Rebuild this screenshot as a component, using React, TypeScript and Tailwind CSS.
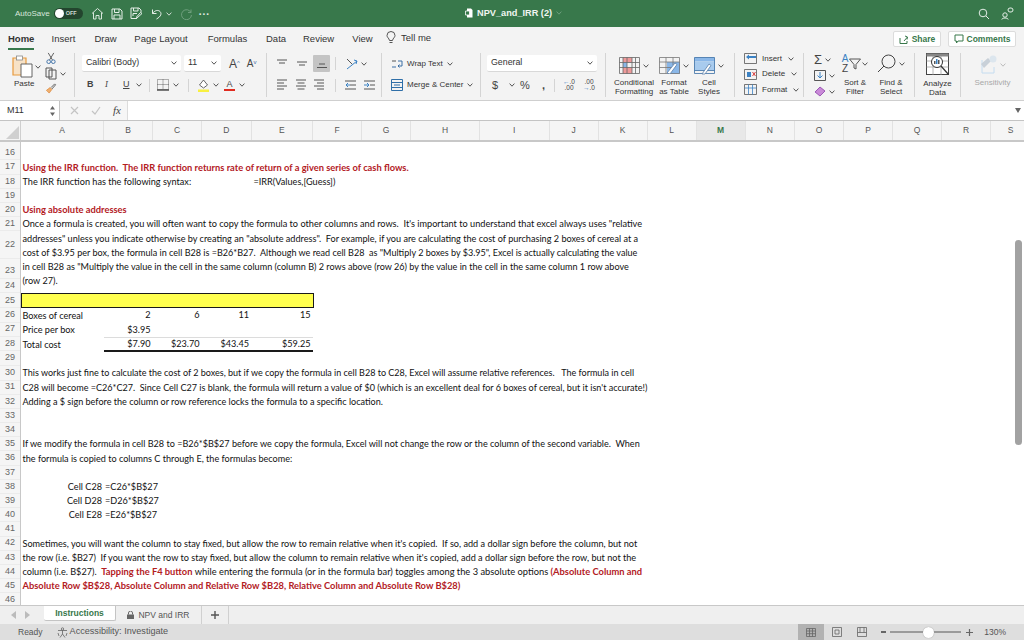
import React from "react";

const UI = "font-['Liberation_Sans',Arial,sans-serif]";
const CELL = "font-['Lato','Liberation_Sans',sans-serif]";

const Chev = ({ c = "#555" }: { c?: string }) => (
  <svg width="6" height="4" viewBox="0 0 6 4" className="shrink-0"><path d="M.6.6 3 3.2 5.4.6" fill="none" stroke={c} strokeWidth="1" /></svg>
);

const Sep = () => <div className="w-px h-[44px] bg-[#d4d4d4] shrink-0 self-center" />;
const MiniSep = () => <div className="w-px h-[13px] bg-[#d4d4d4] shrink-0" />;

const Lines = ({ kind }: { kind: string }) => {
  const map: Record<string, string> = {
    top: "M1 2H11M3 5H9",
    mid: "M1 4H11M3 7H9",
    bot: "M3 6H9M1 9.5H11",
    left: "M1 1H11M1 4H8M1 7H11M1 10H8",
    center: "M1 1H11M2.5 4H9.5M1 7H11M2.5 10H9.5",
    right: "M1 1H11M4 4H11M1 7H11M4 10H11",
  };
  return <svg width="12" height="12" viewBox="0 0 12 12"><path d={map[kind]} fill="none" stroke="#555" strokeWidth="1" /></svg>;
};

const tabs = ["Home", "Insert", "Draw", "Page Layout", "Formulas", "Data", "Review", "View"];
const tabW = [26, 25, 23, 54, 41, 20, 31, 21];
const tabG = [0, 17, 18, 17, 19, 18, 17, 18];

const TitleBar = () => (
  <div className={`h-[27px] bg-[#38784b] flex items-center text-white shrink-0 ${UI}`}>
    <span className="ml-[15px] text-[8px] text-[#d8e6dc]">AutoSave</span>
    <div className="ml-[4px] w-[29px] h-[11px] rounded-full bg-[#23452e] flex items-center">
      <div className="w-[9px] h-[9px] ml-[1px] rounded-full bg-white" />
      <span className="ml-[2px] text-[5.5px] font-bold text-[#cfdcd3]">OFF</span>
    </div>
    <svg className="ml-[8px]" width="13" height="13" viewBox="0 0 13 13" fill="none" stroke="#d8e6dc"><path d="M1 6.5 6.5 1.5 12 6.5M2.5 5.5V12H5V8.5H8V12H10.5V5.5" /></svg>
    <svg className="ml-[7px]" width="12" height="12" viewBox="0 0 12 12" fill="none" stroke="#e4eee7"><path d="M1 1H9L11 3V11H1ZM3.5 1V4.5H8V1M3 11V7H9V11" /></svg>
    <svg className="ml-[7px]" width="13" height="13" viewBox="0 0 13 13" fill="none" stroke="#e4eee7"><path d="M7 11.5H1V1H9L11 3V5.5M3.5 1V4H8V1M3 9V6.5H7M7 11 12 6.5 10.5 5.5 6.5 10Z" /></svg>
    <svg className="ml-[8px]" width="12" height="12" viewBox="0 0 12 12" fill="none" stroke="#e4eee7"><path d="M1.5 1.5V5.5H5.5M1.5 5.5C3.5 2.5 7 1.5 9 3.5 11 5.5 10 8.5 5.5 11" /></svg>
    <div className="ml-[3px]"><Chev c="#cfdcd3" /></div>
    <svg className="ml-[8px]" width="13" height="13" viewBox="0 0 13 13" fill="none" stroke="#6e9e7d"><path d="M11 2.5V5.5H8M11 5.5A5 5 0 1 0 11.5 8" /></svg>
    <span className="ml-[6px] text-[10px] leading-none tracking-[1px] text-[#e4eee7] font-bold -mt-[3px]">...</span>
    <div className="ml-[255px] flex items-center gap-[4px]">
      <svg width="8" height="10" viewBox="0 0 8 10"><path d="M2 0.5H6L7.5 2V9.5H2Z" fill="#fff" /><path d="M0.5 3H4.5V7H0.5Z" fill="#38784b" stroke="#fff" strokeWidth=".8" /></svg>
      <span className="text-[9.2px] font-bold text-[#f0f5f1]">NPV_and_IRR (2)</span>
      <Chev c="#6e9e7d" />
    </div>
    <svg className="ml-auto" width="12" height="12" viewBox="0 0 12 12" fill="none" stroke="#e4eee7" strokeWidth="1"><circle cx="5" cy="5" r="3.8" /><path d="M8 8 11 11" /></svg>
    <svg className="ml-[11px] mr-[10px]" width="13" height="13" viewBox="0 0 13 13" fill="none" stroke="#e4eee7"><circle cx="4" cy="8" r="2.2" /><path d="M.8 12.5C1 10.5 7 10.5 7.2 12.5" /><rect x="7" y="1" width="5" height="4" rx="2" /></svg>
  </div>
);

const TabRow = () => (
  <div className={`h-[23px] bg-[#f3f3f3] flex shrink-0 text-[#333] text-[9.5px] ${UI}`}>
    <div className="flex pl-[8px]">
      {tabs.map((t, i) => (
        <div key={t} style={{ width: tabW[i], marginLeft: tabG[i] }} className={`h-[20px] mt-[3px] text-center leading-[18px] whitespace-nowrap ${i === 0 ? "font-bold border-b-2 border-[#38784b]" : ""}`}>{t}</div>
      ))}
    </div>
    <div className="ml-[13px] flex items-start pt-[4px] gap-[5px]">
      <svg width="10" height="13" viewBox="0 0 10 13" fill="none" stroke="#555"><path d="M3.5 9.5C3 7 1 6.5 1 4.5A4 4 0 0 1 9 4.5C9 6.5 7 7 6.5 9.5ZM3.5 11.5H6.5" /></svg>
      <span className="leading-[14px]">Tell me</span>
    </div>
    <div className="ml-auto flex pt-[4px] gap-[7px] mr-[8px] text-[#38784b] font-bold text-[8.5px]">
      <div className="w-[48px] h-[16px] bg-white border border-[#dcdcdc] rounded-[2px] flex items-center justify-center gap-[3px]">
        <svg width="10" height="10" viewBox="0 0 10 10" fill="none" stroke="#38784b"><path d="M5 7 8.5 3 6 2M8.5 3 8 5.5M1 4V9.5H8V7" /></svg>Share
      </div>
      <div className="w-[68px] h-[16px] bg-white border border-[#dcdcdc] rounded-[2px] flex items-center justify-center gap-[3px]">
        <svg width="10" height="10" viewBox="0 0 10 10" fill="none" stroke="#38784b"><path d="M1 1H9V7H4L2.5 9V7H1Z" /></svg>Comments
      </div>
    </div>
  </div>
);

const Select = ({ text, w }: { text: string; w: number }) => (
  <div style={{ width: w }} className="h-[17px] bg-white rounded-[2px] border-b border-[#d8d8d8] flex items-center justify-between px-[4px] text-[8.8px] text-[#333]">
    <span>{text}</span><Chev />
  </div>
);

const BigLabel = ({ a, b }: { a: string; b?: string }) => (
  <div className="text-[8px] leading-[9px] text-center text-[#333] whitespace-nowrap">{a}{b && <br />}{b}</div>
);

const CondIcon = () => (
  <svg width="21" height="17" viewBox="0 0 21 17">
    <rect x="4" y=".5" width="9" height="5" fill="#ee9a9a" /><rect x="4" y="5.5" width="4" height="5" fill="#8ab7e8" /><rect x="4" y="10.5" width="9" height="6" fill="#ee9a9a" />
    <path d="M.5.5H20.5V16.5H.5ZM4 .5V16.5M8 .5V16.5M13 .5V16.5M16.5.5V16.5M.5 5.5H20.5M.5 10.5H20.5" fill="none" stroke="#666" strokeWidth=".8" />
  </svg>
);
const TableIcon = () => (
  <svg width="21" height="17" viewBox="0 0 21 17">
    <rect x="8" y="5" width="13" height="12" fill="#8ab7e8" />
    <path d="M.5.5H20.5V16.5H.5ZM.5 5H20.5M.5 10.5H14M7 .5V16.5M14 .5V8" fill="none" stroke="#777" strokeWidth=".8" />
    <path d="M8 16 16 6 18 7.5 11 17Z" fill="#fff" stroke="#5a7fa8" strokeWidth=".8" />
  </svg>
);
const StylesIcon = () => (
  <svg width="21" height="18" viewBox="0 0 21 18">
    <rect x=".5" y=".5" width="20" height="4" fill="#8ab7e8" /><rect x=".5" y="4.5" width="20" height="9" fill="#a8cbee" />
    <path d="M.5.5H20.5V16.5H.5ZM.5 13.5H20.5" fill="none" stroke="#3b6ea5" strokeWidth=".8" />
    <path d="M8 17 15 7 17 8.5 11 17Z" fill="#fff" stroke="#5a7fa8" strokeWidth=".8" />
  </svg>
);

const CellRow = ({ label, color, kind }: { label: string; color: string; kind: string }) => (
  <div className="flex items-center h-[15.5px] text-[8px] text-[#333] whitespace-nowrap">
    <svg width="13" height="11" viewBox="0 0 13 11" className="mr-[5px]">
      <path d="M.5.5H12.5V10.5H.5Z" fill="none" stroke="#555" strokeWidth=".8" />
      {kind === "i" && <path d="M12 3H5V1.5L2 4 5 6.5V5H12Z" fill={color} />}
      {kind === "d" && <><rect x="3" y="3" width="4" height="5" fill={color} /><path d="M8.5 3 11.5 7M11.5 3 8.5 7" stroke="#d84040" strokeWidth="1" /></>}
      {kind === "f" && <path d="M.5 4H12.5M4.5.5V10.5M8.5.5V10.5" stroke={color} strokeWidth=".8" />}
    </svg>
    <span>{label}</span><div className="ml-[6px]"><Chev /></div>
  </div>
);

const Ribbon = () => (
  <div className={`h-[51px] bg-[#f3f3f3] border-b border-[#cfcfcf] flex shrink-0 ${UI}`}>
    {/* clipboard */}
    <div className="w-[74px] flex pl-[12px] pt-[5px] shrink-0">
      <div className="flex flex-col items-start w-[27px]">
        <div className="flex items-center gap-[2px]">
          <svg width="21" height="23" viewBox="0 0 21 23">
            <path d="M1 3H14V20H1Z" fill="#f7e2c7" stroke="#e89a3c" strokeWidth="1.2" />
            <rect x="4.5" y="1" width="6" height="4" fill="#fff" stroke="#888" strokeWidth=".8" />
            <path d="M9 9H20V22H9Z" fill="#fff" stroke="#555" strokeWidth=".9" />
          </svg>
          <Chev />
        </div>
        <div className="text-[8px] leading-[9px] text-[#333] mt-[1px] ml-[2px]">Paste</div>
      </div>
      <div className="flex flex-col ml-[6px] -mt-[3px] gap-[3px]">
        <svg width="12" height="12" viewBox="0 0 12 13" fill="none" stroke="#3b6ea5"><circle cx="3.5" cy="10.5" r="2" /><circle cx="8.5" cy="10.5" r="2" /><path d="M4.5 8.5 9 1M7.5 8.5 3 1" stroke="#555" /></svg>
        <div className="flex items-center gap-[3px]">
          <svg width="12" height="13" viewBox="0 0 12 13" fill="none" stroke="#555"><path d="M1 1H7V10H1ZM4 3H11V12H4Z" fill="#f3f3f3" /></svg>
          <Chev />
        </div>
        <svg width="12" height="11" viewBox="0 0 12 12"><path d="M1 8 4 11 7 7 5 5Z" fill="#f0b070" stroke="#d88030" strokeWidth=".7" /><path d="M6 5 10 1 11 2 7 6.5" fill="none" stroke="#555" /></svg>
      </div>
    </div>
    <Sep />
    {/* font */}
    <div className="w-[191px] pl-[7px] pt-[5px] shrink-0 flex flex-col gap-[5px]">
      <div className="flex items-center gap-[3px]">
        <Select text="Calibri (Body)" w={99} />
        <Select text="11" w={37} />
        <span className="ml-[5px] text-[12px] leading-none text-[#444]">A<sup className="text-[6px] text-[#3b6ea5]">^</sup></span>
        <span className="ml-[4px] text-[10px] leading-none text-[#444]">A<sup className="text-[6px] text-[#3b6ea5]">v</sup></span>
      </div>
      <div className="flex items-center h-[16px] text-[9px] text-[#444] pl-[5px]">
        <span className="font-bold w-[18px]">B</span>
        <span className="italic font-serif w-[18px]">I</span>
        <span className="underline w-[13px]">U</span>
        <Chev />
        <div className="mx-[7px]"><MiniSep /></div>
        <svg width="12" height="12" viewBox="0 0 12 12" fill="none" stroke="#444" strokeWidth=".8"><path d="M.5.5H11.5V10.5H.5ZM6 .5V10.5M.5 5.5H11.5" strokeDasharray="1 1" /><path d="M0 11H12" strokeWidth="1.4" /></svg>
        <div className="ml-[4px]"><Chev /></div>
        <div className="mx-[9px]"><MiniSep /></div>
        <svg width="11" height="13" viewBox="0 0 11 13"><path d="M5.5 1 9.5 6 5.5 9 1.5 6Z" fill="#fff" stroke="#444" strokeWidth=".8" /><rect y="10.5" width="11" height="2.5" fill="#f8f040" /></svg>
        <div className="ml-[4px]"><Chev /></div>
        <div className="ml-[5px] flex flex-col items-center w-[11px]">
          <span className="text-[9px] leading-[10px]">A</span><div className="w-[11px] h-[2.5px] bg-[#e02b20]" />
        </div>
        <div className="ml-[4px]"><Chev /></div>
      </div>
    </div>
    <Sep />
    {/* align */}
    <div className="w-[114px] pl-[9px] pt-[5px] shrink-0 flex flex-col gap-[5px]">
      <div className="flex items-center h-[17px]">
        <div className="w-[19px]"><Lines kind="top" /></div>
        <div className="w-[17px] ml-[1px]"><Lines kind="mid" /></div>
        <div className="w-[17px] h-[17px] bg-[#c4c4c4] rounded-[1px] flex items-center justify-center"><Lines kind="bot" /></div>
        <div className="ml-[5px]"><MiniSep /></div>
        <svg className="ml-[10px]" width="12" height="12" viewBox="0 0 12 12" fill="none" stroke="#3b82c4"><path d="M1 11 11 3M8 2 11 3 10 6" /><path d="M1 1 6 6" stroke="#555" /></svg>
        <div className="ml-[3px]"><Chev /></div>
      </div>
      <div className="flex items-center h-[16px]">
        <div className="w-[19px]"><Lines kind="left" /></div>
        <div className="w-[18px]"><Lines kind="center" /></div>
        <div className="w-[17px]"><Lines kind="right" /></div>
        <div className="ml-[5px]"><MiniSep /></div>
        <svg className="ml-[9px]" width="11" height="10" viewBox="0 0 11 10" fill="none" stroke="#555"><path d="M0 1H11M0 9H11M5 5H11" /><path d="M5 5H1M3 3 1 5 3 7" stroke="#3b82c4" /></svg>
        <svg className="ml-[8px]" width="11" height="10" viewBox="0 0 11 10" fill="none" stroke="#555"><path d="M0 1H11M0 9H11M6 5H11" /><path d="M0 5H5M3 3 5 5 3 7" stroke="#3b82c4" /></svg>
      </div>
    </div>
    <Sep />
    {/* wrap */}
    <div className="w-[98px] pl-[9px] pt-[5px] shrink-0 flex flex-col gap-[5px] text-[8px] text-[#333] whitespace-nowrap">
      <div className="flex items-center h-[17px] gap-[4px]">
        <svg width="12" height="12" viewBox="0 0 12 12" fill="none" stroke="#3b6ea5"><path d="M1 9H5M7 3H11V8H7M8.5 6.5 7 8 8.5 9.5" /><path d="M1 3H5" stroke="#555" /></svg>
        <span>Wrap Text</span><Chev />
      </div>
      <div className="flex items-center h-[16px] gap-[4px]">
        <svg width="12" height="12" viewBox="0 0 12 12" fill="none" stroke="#2f6fa8"><path d="M.5.5H11.5V11.5H.5ZM.5 3.5H11.5M.5 8.5H11.5M3 6H9" /></svg>
        <span>Merge &amp; Center</span><Chev />
      </div>
    </div>
    <Sep />
    {/* number */}
    <div className="w-[124px] pl-[6px] pt-[5px] shrink-0 flex flex-col gap-[5px]">
      <Select text="General" w={110} />
      <div className="flex items-center h-[16px] text-[#444] pl-[5px]">
        <span className="text-[11px] w-[17px]">$</span><Chev />
        <span className="text-[11px] ml-[5px] w-[22px]">%</span>
        <span className="text-[11px] font-bold w-[12px]">,</span>
        <MiniSep />
        <span className="ml-[7px] text-[6.5px] leading-[6.5px] text-center w-[14px]"><span className="text-[#3b82c4]">←</span>.0<br />.00</span>
        <span className="ml-[6px] text-[6.5px] leading-[6.5px] text-center w-[14px]">.00<br /><span className="text-[#3b82c4]">→</span>.0</span>
      </div>
    </div>
    <Sep />
    {/* styles */}
    <div className="w-[128px] pl-[5px] pt-[6px] shrink-0 flex">
      {[
        { a: "Conditional", b: "Formatting", I: CondIcon, w: 46 },
        { a: "Format", b: "as Table", I: TableIcon, w: 34 },
        { a: "Cell", b: "Styles", I: StylesIcon, w: 36 },
      ].map(({ a, b, I, w }) => (
        <div key={a} style={{ width: w }} className="flex flex-col items-center">
          <div className="h-[19px] flex items-center gap-[3px]"><I /><Chev /></div>
          <div className="mt-[3px]"><BigLabel a={a} b={b} /></div>
        </div>
      ))}
    </div>
    <Sep />
    {/* cells */}
    <div className="w-[68px] pl-[9px] pt-[1px] shrink-0">
      <CellRow label="Insert" color="#3b82c4" kind="i" />
      <CellRow label="Delete" color="#3b82c4" kind="d" />
      <CellRow label="Format" color="#3b82c4" kind="f" />
    </div>
    <Sep />
    {/* editing */}
    <div className="w-[110px] pl-[10px] shrink-0 flex">
      <div className="flex flex-col pt-[3px] gap-[3px] w-[22px]">
        <div className="flex items-center gap-[3px] h-[13px]"><span className="text-[13px] leading-none text-[#444]">Σ</span><Chev /></div>
        <div className="flex items-center gap-[3px] h-[13px]">
          <svg width="12" height="11" viewBox="0 0 12 11" fill="none"><path d="M.5.5H11.5V10.5H.5Z" stroke="#555" /><path d="M6 2V8M3.5 5.5 6 8 8.5 5.5" stroke="#3b82c4" /></svg><Chev />
        </div>
        <div className="flex items-center gap-[3px] h-[13px]">
          <svg width="12" height="11" viewBox="0 0 12 11"><path d="M1 6 6 1 11 5 6 10Z" fill="#c98ad8" stroke="#8b3fa8" strokeWidth=".8" /></svg><Chev />
        </div>
      </div>
      <div className="w-[38px] flex flex-col items-center pt-[3px]">
        <div className="h-[21px] flex items-center gap-[1px]">
          <div className="text-[10px] leading-[9.5px] text-center"><span className="text-[#3b82c4]">A</span><br /><span className="text-[#444]">Z</span></div>
          <svg width="12" height="12" viewBox="0 0 12 12" fill="none" stroke="#555"><path d="M.5 1H11.5L7 6.5V11L5 10V6.5Z" /></svg><Chev />
        </div>
        <div className="mt-[4px]"><BigLabel a="Sort &" b="Filter" /></div>
      </div>
      <div className="w-[34px] flex flex-col items-center pt-[3px]">
        <div className="h-[21px] flex items-center gap-[3px]">
          <svg width="19" height="19" viewBox="0 0 19 19" fill="none" stroke="#444"><circle cx="11.5" cy="7.5" r="6.5" /><path d="M7 12 1 18" /></svg><Chev />
        </div>
        <div className="mt-[4px]"><BigLabel a="Find &" b="Select" /></div>
      </div>
    </div>
    <Sep />
    {/* analyze */}
    <div className="w-[45px] shrink-0 flex flex-col items-center pt-[3px]">
      <svg width="24" height="23" viewBox="0 0 24 23" fill="none">
        <rect x=".5" y=".5" width="22" height="21" fill="#fff" stroke="#444" />
        <rect x=".5" y=".5" width="22" height="3" fill="#888" />
        <path d="M.5 8H22.5M.5 14H22.5M7 3V22M15 3V22" stroke="#999" strokeWidth=".7" />
        <circle cx="11" cy="9" r="5.5" fill="#fff" stroke="#333" strokeWidth="1" />
        <rect x="8" y="8" width="1.5" height="3" fill="#555" /><rect x="10" y="6" width="1.5" height="5" fill="#3b82c4" /><rect x="12" y="7" width="1.5" height="4" fill="#555" />
        <path d="M15 13 22.5 21.5" stroke="#333" strokeWidth="1.2" />
      </svg>
      <div className="mt-[3px]"><BigLabel a="Analyze" b="Data" /></div>
    </div>
    <Sep />
    {/* sensitivity */}
    <div className="flex-1 flex flex-col items-center pt-[4px]">
      <div className="flex items-center gap-[2px] h-[21px]">
        <svg width="19" height="20" viewBox="0 0 19 20" fill="none">
          <path d="M3 5V18H15V12" stroke="#c4dcf0" />
          <path d="M2 9 9 3 12 6 5 13Z" fill="#c8d0d8" /><circle cx="14" cy="4" r="3.5" fill="#dce6ee" />
        </svg>
        <Chev c="#bbb" />
      </div>
      <div className="text-[8px] leading-[9px] text-[#a8a8a8] mt-[3px]">Sensitivity</div>
    </div>
  </div>
);

const FormulaBar = () => (
  <div className={`h-[20px] bg-white border-b border-[#c4c4c4] flex items-stretch shrink-0 ${UI}`}>
    <div className="w-[60px] flex items-center justify-between pl-[7px] pr-[4px] border-r border-[#c4c4c4] text-[9px] text-[#333]">
      <span>M11</span>
      <svg width="5" height="12" viewBox="0 0 5 12"><path d="M2.5 1 5 4.5H0ZM2.5 11 0 7.5H5Z" fill="#666" /></svg>
    </div>
    <div className="w-[68px] bg-[#f6f6f6] flex items-center border-r border-[#dcdcdc] pl-[10px]">
      <svg width="9" height="9" viewBox="0 0 9 9" fill="none" stroke="#c4c4c4" strokeWidth="1.2"><path d="M1 1 8 8M8 1 1 8" /></svg>
      <svg className="ml-[12px]" width="10" height="9" viewBox="0 0 10 9" fill="none" stroke="#c4c4c4" strokeWidth="1.2"><path d="M1 5 4 8 9 1" /></svg>
      <span className="ml-[12px] font-['Liberation_Serif',serif] italic text-[11px] text-[#444]">fx</span>
    </div>
    <div className="flex-1 flex items-center justify-end pr-[2px]"><div className="w-0 h-0 border-l-[3.5px] border-r-[3.5px] border-t-[5px] border-l-transparent border-r-transparent border-t-[#666] mr-[1px]" /></div>
  </div>
);

const cols: [string, number][] = [["A", 83], ["B", 49], ["C", 49], ["D", 49.5], ["E", 61.5], ["F", 49], ["G", 49], ["H", 69], ["I", 69.5], ["J", 49], ["K", 49], ["L", 49], ["M", 49], ["N", 49.5], ["O", 49], ["P", 49], ["Q", 49], ["R", 49], ["S", 40]];

const ColHeader = () => (
  <div className={`h-[21px] bg-[#f5f5f5] border-b-2 border-[#c8c8c8] flex shrink-0 text-[8.5px] text-[#555] ${UI}`}>
    <div className="w-[21px] border-r border-[#cfcfcf] shrink-0 flex items-end justify-end pr-[1px] pb-[1px]">
      <div className="w-0 h-0 border-b-[13px] border-l-[13px] border-b-[#d0d0d0] border-l-transparent" />
    </div>
    {cols.map(([c, w]) => (
      <div key={c} style={{ width: w }} className={`shrink-0 flex items-center justify-center border-r border-[#e2e2e2] ${c === "M" ? "bg-[#e8e8e8] text-[#38784b] font-bold" : ""}`}>{c}</div>
    ))}
  </div>
);

const rowHeads: [number, number, number?][] = [
  [16, 14.2], [17, 14.2], [18, 14.2], [19, 14.2], [20, 14.2], [21, 14.2], [22, 27.9], [23, 19.6, 5], [24, 14.5], [25, 15],
  [26, 14.2], [27, 14.2], [28, 14.2], [29, 15.4], [30, 14.2], [31, 14.2], [32, 14.2], [33, 14.2], [34, 14.2], [35, 14.2],
  [36, 14.2], [37, 14.2], [38, 14.2], [39, 14.2], [40, 14.2], [41, 14.2], [42, 14.2], [43, 14.2], [44, 14.2], [45, 14.2], [46, 14.2],
];

const R = ({ children }: { children?: React.ReactNode }) => <span className="text-[#b3201f] font-bold text-[9.32px]">{children}</span>;

const Line = ({ children, cls = "" }: { children?: React.ReactNode; cls?: string }) => (
  <div className={`h-[14.2px] pl-[1.5px] whitespace-nowrap leading-[14px] flex items-center ${cls}`}><span>{children}</span></div>
);

const colW = [49, 49, 49.5, 61.5];

const TableRow = ({ label, vals, last }: { label: string; vals: string[]; last?: boolean }) => (
  <div className={`flex items-center whitespace-nowrap ${last ? "h-[15.4px]" : "h-[14.2px]"}`}>
    <div className="w-[83px] shrink-0 pl-[1.5px]">{label}</div>
    <div className={`flex h-full items-center ${last ? "border-t border-[#dcdcdc] border-b-2 border-b-[#1a1a1a]" : ""}`}>
      {vals.map((v, i) => (
        <div key={i} style={{ width: colW[i] }} className="text-right pr-[2.5px] leading-[12px]">{v}</div>
      ))}
    </div>
  </div>
);

const FormulaLine = ({ a, b }: { a: string; b: string }) => (
  <div className="flex h-[14.2px] items-center whitespace-nowrap">
    <div className="w-[81px] text-right shrink-0">{a}</div>
    <div className="ml-[3px]">{b}</div>
  </div>
);

const Sheet = () => (
  <div className="flex-1 relative bg-white flex overflow-hidden min-h-0">
    <div className={`w-[21px] shrink-0 bg-[#f5f5f5] border-r border-[#c8c8c8] pt-[4.3px] text-[9px] text-[#666] ${UI}`}>
      {rowHeads.map(([n, h, pt]) => (
        <div key={n} style={{ height: h, paddingTop: pt ?? 0 }} className="flex items-center justify-center border-b border-[#ebebeb]">{n}</div>
      ))}
    </div>
    <div className={`flex-1 pt-[4.3px] text-[9.15px] text-[#111] ${CELL}`}>
      <Line />
      <Line><R>Using the IRR function.&nbsp; The IRR function returns rate of return of a given series of cash flows.</R></Line>
      <div className="flex h-[14.2px] items-center whitespace-nowrap pl-[1.5px]">
        <div className="w-[231px]">The IRR function has the following syntax:</div><div>=IRR(Values,[Guess])</div>
      </div>
      <Line />
      <Line><R>Using absolute addresses</R></Line>
      <Line cls="text-[9.18px]">Once a formula is created, you will often want to copy the formula to other columns and rows.&nbsp; It's important to understand that excel always uses "relative</Line>
      <Line>addresses" unless you indicate otherwise by creating an "absolute address".&nbsp; For example, if you are calculating the cost of purchasing 2 boxes of cereal at a</Line>
      <Line cls="text-[9.06px]">cost of $3.95 per box, the formula in cell B28 is =B26*B27.&nbsp; Although we read cell B28&nbsp; as "Multiply 2 boxes by $3.95", Excel is actually calculating the value</Line>
      <Line cls="text-[9.09px]">in cell B28 as "Multiply the value in the cell in the same column (column B) 2 rows above (row 26) by the value in the cell in the same column 1 row above</Line>
      <Line>(row 27).</Line>
      <div className="h-[14.5px] w-[293px] bg-[#ffff4f] border border-[#1a1a1a] mt-[5.2px] mb-[0.5px]" />
      <TableRow label="Boxes of cereal" vals={["2", "6", "11", "15"]} />
      <TableRow label="Price per box" vals={["$3.95", "", "", ""]} />
      <TableRow label="Total cost" vals={["$7.90", "$23.70", "$43.45", "$59.25"]} last />
      <Line />
      <Line cls="text-[9.03px]">This works just fine to calculate the cost of 2 boxes, but if we copy the formula in cell B28 to C28, Excel will assume relative references.&nbsp;&nbsp; The formula in cell</Line>
      <Line cls="text-[9.05px]">C28 will become =C26*C27.&nbsp; Since Cell C27 is blank, the formula will return a value of $0 (which is an excellent deal for 6 boxes of cereal, but it isn't accurate!)</Line>
      <Line cls="text-[9.07px]">Adding a $ sign before the column or row reference locks the formula to a specific location.</Line>
      <Line />
      <Line />
      <Line cls="text-[9.08px]">If we modify the formula in cell B28 to =B26*$B$27 before we copy the formula, Excel will not change the row or the column of the second variable.&nbsp; When</Line>
      <Line cls="text-[9.08px]">the formula is copied to columns C through E, the formulas become:</Line>
      <Line />
      <FormulaLine a="Cell C28" b="=C26*$B$27" />
      <FormulaLine a="Cell D28" b="=D26*$B$27" />
      <FormulaLine a="Cell E28" b="=E26*$B$27" />
      <Line />
      <Line>Sometimes, you will want the column to stay fixed, but allow the row to remain relative when it's copied.&nbsp; If so, add a dollar sign before the column, but not</Line>
      <Line>the row (i.e. $B27)&nbsp; If you want the row to stay fixed, but allow the column to remain relative when it's copied, add a dollar sign before the row, but not the</Line>
      <Line>column (i.e. B$27).&nbsp; <R>Tapping the F4 button</R> <span className="text-[9.3px]">while entering the formula (or in the formula bar) toggles among the 3 absolute options</span> <R>(Absolute Column and</R></Line>
      <Line><R>Absolute Row $B$28, Absolute Column and Relative Row $B28, Relative Column and Absolute Row B$28)</R></Line>
    </div>
    <div className="absolute right-[2px] top-[98px] w-[7px] h-[205px] rounded-full bg-[#a2a2a2]" />
  </div>
);

const SheetTabs = () => (
  <div className={`h-[19px] bg-[#efefef] border-t border-[#c8c8c8] flex shrink-0 text-[8.5px] ${UI}`}>
    <div className="w-[44px] flex items-center gap-[9px] pl-[11px]">
      <div className="w-0 h-0 border-y-[4px] border-y-transparent border-r-[5px] border-r-[#bbb]" />
      <div className="w-0 h-0 border-y-[4px] border-y-transparent border-l-[5px] border-l-[#bbb]" />
    </div>
    <div className="w-[72px] h-[15px] bg-white border-r border-b border-[#c4c4c4] rounded-b-[2px] flex items-center justify-center text-[#38784b] font-bold">Instructions</div>
    <div className="w-[86px] flex items-center justify-center gap-[4px] border-r border-[#d0d0d0] text-[#555]">
      <svg width="7" height="8" viewBox="0 0 7 8"><rect y="3.5" width="7" height="4.5" fill="#666" /><path d="M1.5 3.5V2A2 2 0 0 1 5.5 2V3.5" fill="none" stroke="#666" /></svg>
      <span>NPV and IRR</span>
    </div>
    <div className="w-[27px] flex items-center justify-center border-r border-[#d0d0d0]">
      <svg width="8" height="8" viewBox="0 0 8 8"><path d="M4 0V8M0 4H8" stroke="#555" strokeWidth="1.4" /></svg>
    </div>
  </div>
);

const StatusBar = () => (
  <div className={`h-[16px] bg-[#dedede] flex items-center shrink-0 text-[8.5px] text-[#555] ${UI}`}>
    <span className="ml-[18px]">Ready</span>
    <svg className="ml-[14px]" width="11" height="11" viewBox="0 0 11 11" fill="none" stroke="#666" strokeWidth=".8"><circle cx="5.5" cy="2" r="1.2" /><path d="M1 3.5H10M5.5 3.5V7M3 10.5 5.5 7 8 10.5M1 6 2 9M10 6 9 9" /></svg>
    <span className="ml-[2px] text-[9.1px]">Accessibility: Investigate</span>
    <div className="ml-auto flex items-center h-full">
      <div className="w-[26px] h-full bg-[#b2b2b2] flex items-center justify-center">
        <svg width="10" height="9" viewBox="0 0 10 9" fill="none" stroke="#666" strokeWidth=".8"><path d="M.5.5H9.5V8.5H.5ZM.5 3H9.5M.5 5.7H9.5M3.5.5V8.5M6.5.5V8.5" /></svg>
      </div>
      <svg className="ml-[8px]" width="10" height="10" viewBox="0 0 10 10" fill="none" stroke="#666" strokeWidth=".8"><path d="M.5.5H9.5V9.5H.5ZM3 3H7V7H3Z" /></svg>
      <svg className="ml-[15px]" width="10" height="10" viewBox="0 0 10 10" fill="none" stroke="#666" strokeWidth=".8"><path d="M.5.5H9.5V9.5H.5ZM.5 5.5H9.5M3 .5V5.5M7 .5V5.5" /></svg>
      <div className="ml-[14px] w-[5px] h-[1.5px] bg-[#666]" />
      <div className="ml-[4px] w-[71px] h-[2px] bg-[#9a9a9a] relative flex items-center">
        <div className="absolute left-[33px] w-[11px] h-[11px] rounded-full bg-white shadow-[0_0_1px_#888]" />
      </div>
      <svg className="ml-[5px]" width="7" height="7" viewBox="0 0 7 7"><path d="M3.5 0V7M0 3.5H7" stroke="#666" strokeWidth="1.2" /></svg>
      <span className="ml-[11px] mr-[18px]">130%</span>
    </div>
  </div>
);

export default function App() {
  return (
    <div className="w-[1024px] h-[640px] flex flex-col overflow-hidden bg-white">
      <TitleBar />
      <TabRow />
      <Ribbon />
      <FormulaBar />
      <ColHeader />
      <Sheet />
      <SheetTabs />
      <StatusBar />
    </div>
  );
}
